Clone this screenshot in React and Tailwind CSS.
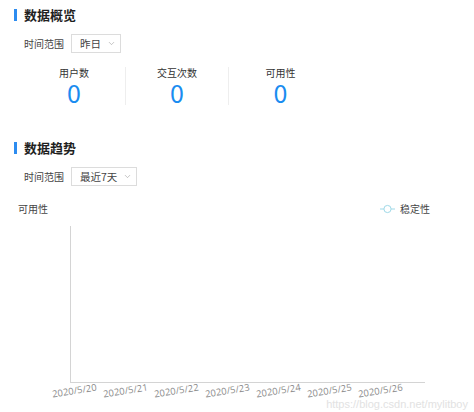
import { ChevronDown } from "lucide-react"

const stats = [
  { label: "用户数", value: "0" },
  { label: "交互次数", value: "0" },
  { label: "可用性", value: "0" },
]

const dates = ["2020/5/20", "2020/5/21", "2020/5/22", "2020/5/23", "2020/5/24", "2020/5/25", "2020/5/26"]

const SectionTitle = ({ children }) => (
  <div className="flex h-[13px] items-center">
    <div className="ml-[14px] h-[12px] w-[3px] bg-[#2d8cf0]" />
    <h2 className="ml-[7px] text-[13px] font-bold leading-[13px] text-[#1f1f1f]">{children}</h2>
  </div>
)

const RangeSelect = ({ value, width }) => (
  <div className="flex h-[19px] items-center">
    <span className="ml-[24px] text-[10px] leading-[12px] text-[#444]">时间范围</span>
    <div
      className={`ml-[7px] flex h-[19px] ${width} items-center border border-[#dcdcdc] bg-white pl-[8px] text-[10.5px] leading-[12px] text-[#444]`}
    >
      <span>{value}</span>
      <ChevronDown size={9} strokeWidth={1.5} className="ml-[6px] text-[#999]" />
    </div>
  </div>
)

const App = () => {
  return (
    <div className="h-[412px] w-[474px] overflow-hidden bg-white font-['Microsoft_YaHei','Noto_Sans_CJK_SC',sans-serif]">
      <div className="pt-[8px]">
        <SectionTitle>数据概览</SectionTitle>
      </div>

      <div className="mt-[13px]">
        <RangeSelect value="昨日" width="w-[50px]" />
      </div>

      <div className="ml-[23px] mt-[14px] flex">
        {stats.map(({ label, value }, i) => (
          <div
            key={label}
            className={`flex h-[38px] w-[103px] flex-col items-center ${i < 2 ? "border-r border-[#eeeeee]" : ""}`}
          >
            <span className="text-[10px] leading-[12px] text-[#333]">{label}</span>
            <span className="text-[25px] leading-[26px] text-[#1a8cf0]">{value}</span>
          </div>
        ))}
      </div>

      <div className="mt-[36px]">
        <SectionTitle>数据趋势</SectionTitle>
      </div>

      <div className="mt-[13px]">
        <RangeSelect value="最近7天" width="w-[66px]" />
      </div>

      <div className="mt-[17px] flex h-[12px] items-center justify-between">
        <span className="ml-[18px] text-[10px] leading-[12px] text-[#444]">可用性</span>
        <div className="mr-[44px] flex items-center">
          <svg width="15" height="10" viewBox="0 0 15 10">
            <line x1="0" y1="5" x2="15" y2="5" stroke="#9fd9e8" strokeWidth="1" />
            <circle cx="7.5" cy="5" r="3.6" fill="white" stroke="#9fd9e8" strokeWidth="1" />
          </svg>
          <span className="ml-[5px] text-[10px] leading-[12px] text-[#444]">稳定性</span>
        </div>
      </div>

      <div className="ml-[70px] mt-[11px] h-[157px] w-[355px] border-b border-l border-[#d4d4d4]" />

      <div className="ml-[49px] mt-[2px] flex h-[13px] leading-[12px]">
        {dates.map((d) => (
          <div key={d} className="flex w-[51px] justify-center">
            <span className="-rotate-[9deg] whitespace-nowrap font-['Open_Sans',sans-serif] text-[9.5px] leading-[12px] text-[#8c8c8c]">
              {d}
            </span>
          </div>
        ))}
      </div>

      <div className="flex h-[12px] justify-end pr-[6px]">
        <span className="font-['Liberation_Sans',sans-serif] text-[11px] leading-[12px] text-[#e2e2e2]">
          https://blog.csdn.net/mylitboy
        </span>
      </div>
    </div>
  )
}

export default App
